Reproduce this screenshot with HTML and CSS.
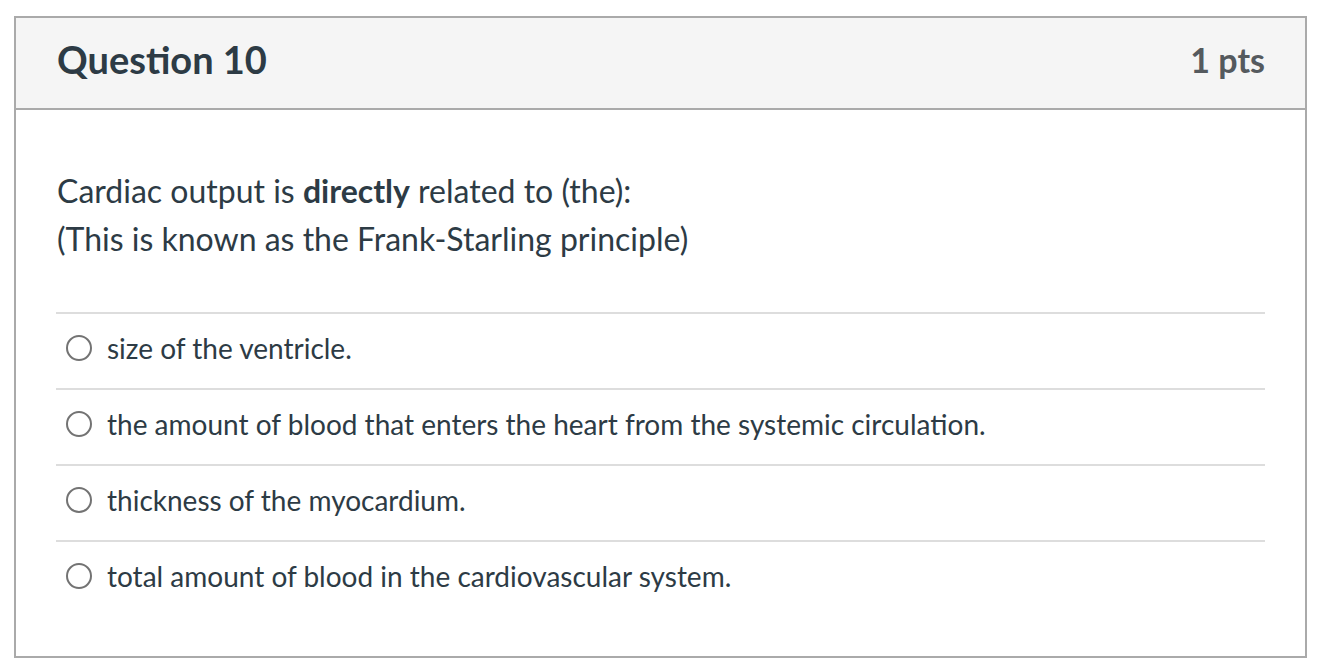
FILE: index.html
```html
<!DOCTYPE html>
<html lang="en">
<head>
<meta charset="utf-8">
<link rel="stylesheet" href="styles.css">
</head>
<body>
<div class="question">
  <div class="header">
    <h2 class="title">Question 10</h2>
    <div class="points">1 pts</div>
  </div>
  <div class="content">
    <div class="text">
      <p>Cardiac output is <strong>directly</strong> related to (the):</p>
      <p>(This is known as the Frank-Starling principle)</p>
    </div>
    <div class="answers">
      <label class="answer"><span class="radio"></span><span class="label">size of the ventricle.</span></label>
      <label class="answer"><span class="radio"></span><span class="label">the amount of blood that enters the heart from the systemic circulation.</span></label>
      <label class="answer"><span class="radio"></span><span class="label">thickness of the myocardium.</span></label>
      <label class="answer"><span class="radio"></span><span class="label">total amount of blood in the cardiovascular system.</span></label>
    </div>
  </div>
</div>
</body>
</html>
```
FILE: styles.css
```css
html, body {
  margin: 0;
  padding: 0;
  background: #fff;
}
body {
  font-family: Lato, "Open Sans", sans-serif;
  color: #2d3b45;
}
.question {
  box-sizing: border-box;
  margin: 16px 0 0 14px;
  width: 1293px;
  height: 642px;
  border: 2px solid #aaaaaa;
}
.header {
  box-sizing: border-box;
  height: 92px;
  background: #f5f5f5;
  border-bottom: 2px solid #aaaaaa;
  display: flex;
  align-items: center;
  justify-content: space-between;
  padding: 0 40px 8px 41px;
}
.title {
  margin: 0;
  font-size: 38px;
  font-weight: 700;
  color: #2d3b45;
}
.points {
  font-size: 34px;
  font-weight: 700;
  color: #555a5e;
}
.content {
  padding: 57px 40px 40px 40px;
}
.text p {
  margin: 0;
  padding-left: 1px;
  font-size: 32px;
  line-height: 48px;
}
.answers {
  margin-top: 49px;
}
.answer {
  box-sizing: border-box;
  height: 76px;
  border-top: 2px solid #dddddd;
  display: flex;
  align-items: center;
  padding: 0 0 7px 10px;
  font-size: 28px;
}
.radio {
  box-sizing: border-box;
  width: 26px;
  height: 26px;
  border: 2px solid #737373;
  border-radius: 50%;
  margin-right: 15px;
  flex: none;
}
.label {
  color: #2d3b45;
}
```
